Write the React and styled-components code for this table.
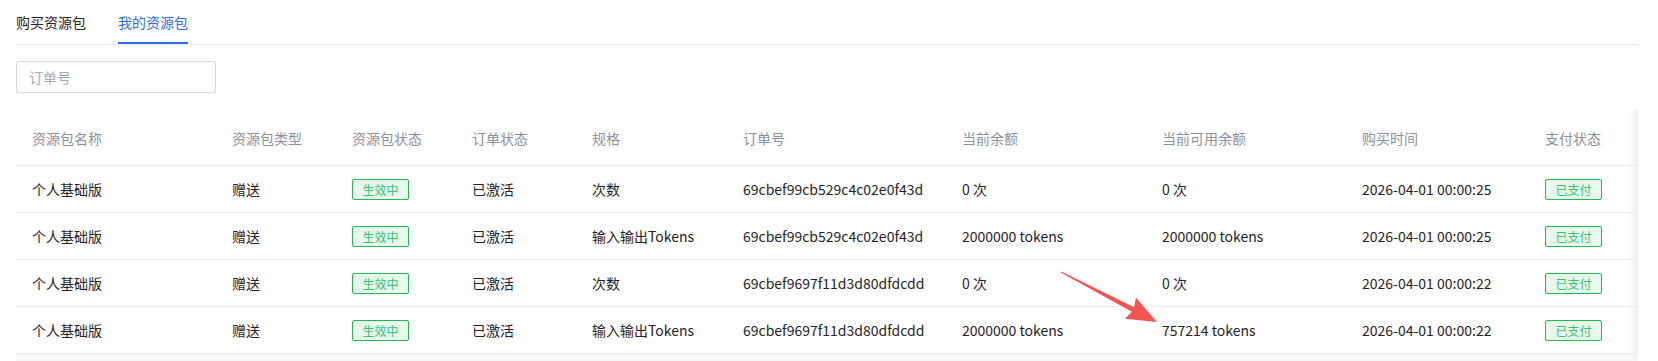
import React from 'react';
import styled, { createGlobalStyle } from 'styled-components';

const GlobalStyle = createGlobalStyle`
  body {
    margin: 0;
    background: #fff;
    font-family: "Noto Sans CJK SC", "Noto Sans", sans-serif;
    color: #1f2329;
  }
`;

const columns = [
    { key: 'name', title: '资源包名称', width: 200 },
    { key: 'type', title: '资源包类型', width: 120 },
    { key: 'state', title: '资源包状态', width: 120 },
    { key: 'order', title: '订单状态', width: 120 },
    { key: 'spec', title: '规格', width: 151 },
    { key: 'no', title: '订单号', width: 219 },
    { key: 'balance', title: '当前余额', width: 200 },
    { key: 'usable', title: '当前可用余额', width: 200 },
    { key: 'time', title: '购买时间', width: 183 },
    { key: 'pay', title: '支付状态', width: 109 },
];

const gridColumns = columns.map((c) => `${c.width}px`).join(' ');

const rows = [
    { spec: '次数', no: '69cbef99cb529c4c02e0f43d', balance: '0 次', usable: '0 次', time: '2026-04-01 00:00:25' },
    { spec: '输入输出Tokens', no: '69cbef99cb529c4c02e0f43d', balance: '2000000 tokens', usable: '2000000 tokens', time: '2026-04-01 00:00:25' },
    { spec: '次数', no: '69cbef9697f11d3d80dfdcdd', balance: '0 次', usable: '0 次', time: '2026-04-01 00:00:22' },
    { spec: '输入输出Tokens', no: '69cbef9697f11d3d80dfdcdd', balance: '2000000 tokens', usable: '757214 tokens', time: '2026-04-01 00:00:22' },
];

const App = () => {
    return (
        <Page>
            <GlobalStyle />
            <Tabs>
                <Tab>购买资源包</Tab>
                <Tab active>我的资源包</Tab>
            </Tabs>
            <SearchInput placeholder="订单号" />
            <TableWrap>
                <HeadRow>
                    {columns.map((c) => (
                        <HeadCell key={c.key}>{c.title}</HeadCell>
                    ))}
                </HeadRow>
                {rows.map((r, i) => (
                    <BodyRow key={i}>
                        <Cell>个人基础版</Cell>
                        <Cell>赠送</Cell>
                        <Cell><Tag>生效中</Tag></Cell>
                        <Cell>已激活</Cell>
                        <Cell>{r.spec}</Cell>
                        <Cell>{r.no}</Cell>
                        <Cell>{r.balance}</Cell>
                        <Cell>{r.usable}</Cell>
                        <Cell>{r.time}</Cell>
                        <Cell><Tag>已支付</Tag></Cell>
                    </BodyRow>
                ))}
                <ScrollTrack />
            </TableWrap>
            <Arrow width="120" height="70" viewBox="0 0 120 70">
                <polygon
                    points="11.2,9.6 84.2,45.3 85.9,35.5 107,60 74.9,56.7 81.9,49.7 10.8,10.4"
                    fill="#f25552"
                />
            </Arrow>
        </Page>
    );
};

export default App;

const Page = styled.div`
    position: relative;
    padding: 0 20px 0 16px;
    width: 1658px;
    height: 361px;
    box-sizing: border-box;
    overflow: hidden;
`;

const Tabs = styled.div`
    display: flex;
    gap: 32px;
    height: 44px;
    border-bottom: 1px solid #e8e9eb;
`;

const Tab = styled.div`
    height: 44px;
    line-height: 44px;
    font-size: 14px;
    color: ${(p) => (p.active ? '#2b6ff6' : '#1f2329')};
    box-sizing: border-box;
    border-bottom: 2px solid ${(p) => (p.active ? '#2b6ff6' : 'transparent')};
    margin-bottom: -1px;
`;

const SearchInput = styled.input`
    display: block;
    margin-top: 16px;
    width: 200px;
    height: 32px;
    box-sizing: border-box;
    padding: 0 12px;
    border: 1px solid #d9d9d9;
    border-radius: 2px;
    font-family: inherit;
    font-size: 14px;
    outline: none;
    &::placeholder {
        color: #a8abb2;
    }
`;

const TableWrap = styled.div`
    margin-top: 17px;
    width: 1622px;
    font-size: 14px;
    box-shadow: inset -12px 0 10px -10px rgba(0, 0, 0, 0.1);
`;

const HeadRow = styled.div`
    display: grid;
    grid-template-columns: ${gridColumns};
    height: 56px;
    box-sizing: border-box;
    border-bottom: 1px solid #ececee;
`;

const BodyRow = styled.div`
    display: grid;
    grid-template-columns: ${gridColumns};
    height: 47px;
    box-sizing: border-box;
    border-bottom: 1px solid #ececee;
`;

const HeadCell = styled.div`
    display: flex;
    align-items: center;
    padding: 0 16px;
    color: #8a919c;
    white-space: nowrap;
`;

const Cell = styled.div`
    display: flex;
    align-items: center;
    padding: 0 16px;
    color: #1f2329;
    white-space: nowrap;
`;

const Tag = styled.span`
    display: inline-block;
    height: 21px;
    line-height: 19px;
    padding: 0 9.5px;
    box-sizing: border-box;
    border: 1px solid #22bb4f;
    border-radius: 2px;
    background: #e7f8ec;
    color: #35c46e;
    font-size: 12px;
`;

const ScrollTrack = styled.div`
    height: 8px;
    background: #f8f8f8;
`;

const Arrow = styled.svg`
    position: absolute;
    left: 1050px;
    top: 262px;
`;
